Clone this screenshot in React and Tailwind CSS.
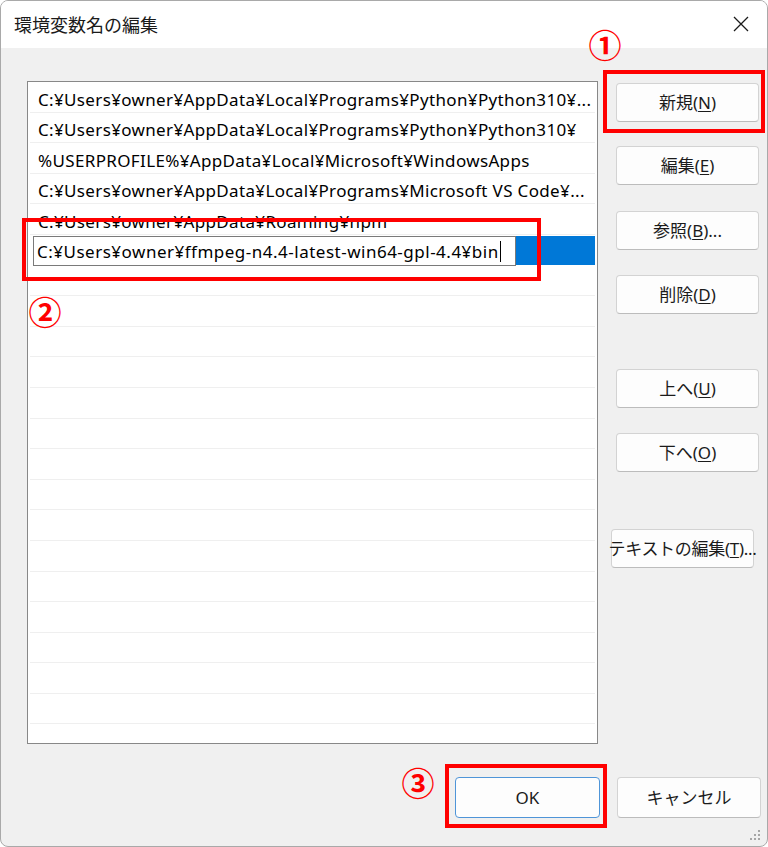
import React from "react";

const rows = [
  "C:¥Users¥owner¥AppData¥Local¥Programs¥Python¥Python310¥...",
  "C:¥Users¥owner¥AppData¥Local¥Programs¥Python¥Python310¥",
  "%USERPROFILE%¥AppData¥Local¥Microsoft¥WindowsApps",
  "C:¥Users¥owner¥AppData¥Local¥Programs¥Microsoft VS Code¥...",
  "C:¥Users¥owner¥AppData¥Roaming¥npm",
];

function Btn({ children, className = "" }) {
  return (
    <div
      className={
        "h-[39px] w-[143px] flex items-center justify-center rounded-[4px] border border-[#d3d3d3] border-b-[#bcbcbc] bg-[#fdfdfd] text-[17px] text-[#1b1b1b] " +
        className
      }
    >
      <span className="whitespace-nowrap">{children}</span>
    </div>
  );
}

function Circled({ ch, className }) {
  return (
    <div
      className={
        "absolute w-[38px] h-[38px] flex items-center justify-center text-[#ff0000] text-[33px] font-bold leading-none font-['Noto_Sans_CJK_JP',sans-serif] " +
        className
      }
    >
      {ch}
    </div>
  );
}

export default function App() {
  const empties = Array.from({ length: 17 });
  return (
    <div className="relative w-[768px] h-[847px] bg-white font-['Noto_Sans','Noto_Sans_CJK_JP',sans-serif] text-black">
      <div className="w-full h-full flex flex-col rounded-[8px] border border-[#a9a9a9] overflow-hidden bg-[#f0f0f0]">
        {/* title bar */}
        <div className="h-[47px] shrink-0 bg-white flex items-center justify-between pl-[13px] pr-[18px]">
          <span className="text-[18px] text-[#1a1a1a] font-['Noto_Sans_CJK_JP',sans-serif]">環境変数名の編集</span>
          <svg width="16" height="16" viewBox="0 0 16 16" className="mt-[-2px]">
            <path d="M1 1 L15 15 M15 1 L1 15" stroke="#1a1a1a" strokeWidth="1.3" fill="none" />
          </svg>
        </div>

        {/* body */}
        <div className="flex pt-[33px] pl-[26px]">
          <div className="w-[571px] h-[663px] border border-[#888888] bg-white overflow-hidden text-[17px] tracking-[0.35px]">
            {rows.map((t, i) => (
              <div key={i} className="h-[30.6px] mx-[2px] border-b border-[#efefef] flex items-center pl-[8px] pt-[5px] whitespace-nowrap overflow-hidden">
                {t}
              </div>
            ))}
            <div className="h-[30.6px] flex items-start pt-[1px]">
              <div className="ml-[5px] w-[483px] h-[30px] border border-[#7a7a7a] bg-white flex items-center pl-[3px] pt-[2px] whitespace-nowrap overflow-hidden tracking-[0.5px]">
                C:¥Users¥owner¥ffmpeg-n4.4-latest-win64-gpl-4.4¥bin
                <span className="inline-block w-[1px] h-[21px] bg-black ml-[1px]" />
              </div>
              <div className="w-[79px] h-[29px] bg-[#0078d7]" />
            </div>
            {empties.map((_, i) => (
              <div key={i} className="h-[30.6px] mx-[2px] border-b border-[#efefef]" />
            ))}
          </div>

          <div className="ml-[18px] flex flex-col">
            <Btn className="mt-[2px]">
              新規(<u className="underline-offset-2">N</u>)
            </Btn>
            <Btn className="mt-[24px]">
              編集(<u className="underline-offset-2">E</u>)
            </Btn>
            <Btn className="mt-[26px]">
              参照(<u className="underline-offset-2">B</u>)...
            </Btn>
            <Btn className="mt-[25px]">
              削除(<u className="underline-offset-2">D</u>)
            </Btn>
            <Btn className="mt-[55px]">
              上へ(<u className="underline-offset-2">U</u>)
            </Btn>
            <Btn className="mt-[25px]">
              下へ(<u className="underline-offset-2">O</u>)
            </Btn>
            <Btn className="mt-[57px] -ml-[5px] text-[16px] tracking-[-0.3px]">
              テキストの編集(<u className="underline-offset-2">T</u>)...
            </Btn>
          </div>
        </div>

        {/* footer */}
        <div className="flex justify-end gap-[17px] pr-[6px] mt-[33px]">
          <div className="h-[41px] w-[145px] flex items-center justify-center rounded-[4px] border border-[#4f95d8] bg-[#fdfdfd] text-[17px] text-[#1b1b1b]">
            OK
          </div>
          <div className="h-[41px] w-[144px] flex items-center justify-center rounded-[4px] border border-[#d3d3d3] border-b-[#bcbcbc] bg-[#fdfdfd] text-[17px] text-[#1b1b1b]">
            キャンセル
          </div>
        </div>
      </div>

      {/* resize grip */}
      <svg className="absolute left-[748px] top-[829px]" width="14" height="14" viewBox="0 0 14 14">
        <g fill="#a6a6a6">
          <rect x="10" y="1" width="2" height="2" />
          <rect x="6" y="5" width="2" height="2" />
          <rect x="10" y="5" width="2" height="2" />
          <rect x="2" y="9" width="2" height="2" />
          <rect x="6" y="9" width="2" height="2" />
          <rect x="10" y="9" width="2" height="2" />
        </g>
      </svg>

      {/* annotations */}
      <div className="absolute left-[603px] top-[70px] w-[162px] h-[63px] border-[4px] border-[#ff0000]" />
      <div className="absolute left-[22px] top-[218px] w-[519px] h-[63px] border-[4px] border-[#ff0000]" />
      <div className="absolute left-[445px] top-[764px] w-[162px] h-[64px] border-[4px] border-[#ff0000]" />
      <Circled ch="①" className="left-[586px] top-[25px]" />
      <Circled ch="②" className="left-[26px] top-[292px]" />
      <Circled ch="③" className="left-[399px] top-[763px]" />
    </div>
  );
}
